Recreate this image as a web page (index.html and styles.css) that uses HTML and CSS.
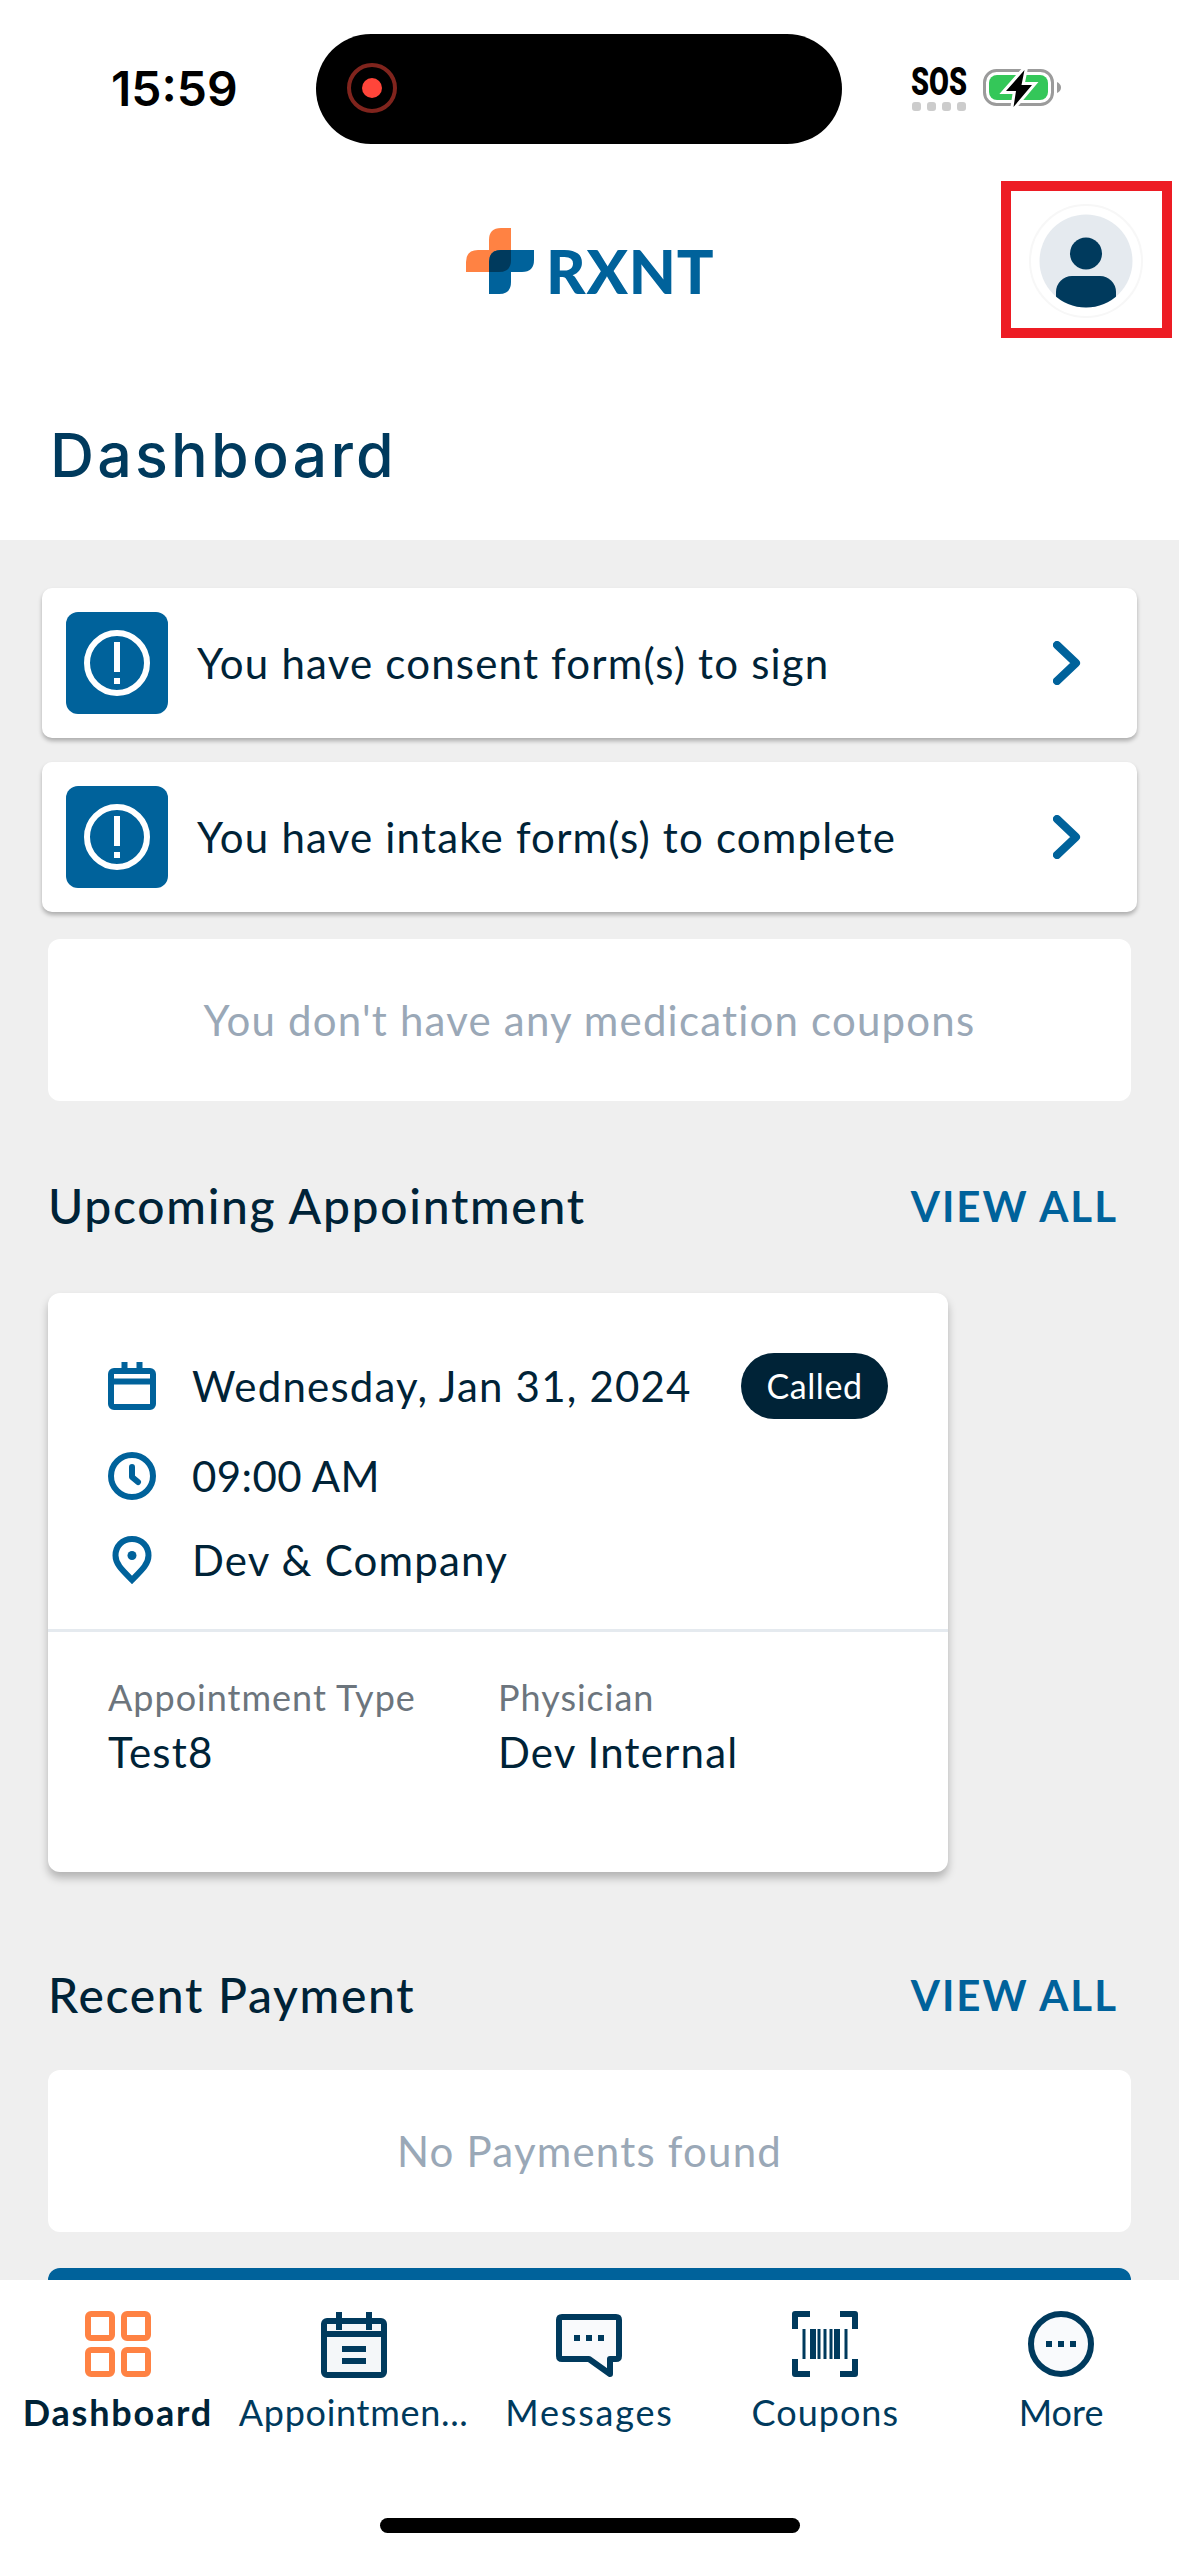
FILE: index.html
```html
<!DOCTYPE html>
<html lang="en">
<head>
    <meta charset="UTF-8">
    <meta name="viewport" content="width=device-width, initial-scale=1.0">
    <title>RXNT Dashboard</title>
    <link rel="stylesheet" href="styles.css">
</head>
<body>
    <!-- Phone status bar -->
    <div class="status-bar">
        <span class="time">15:59</span>
        <div class="island">
            <div class="record"><div class="record-dot"></div></div>
        </div>
        <div class="signal">
            <span class="sos">SOS</span>
            <div class="signal-dots"><i></i><i></i><i></i><i></i></div>
        </div>
        <svg class="battery" width="80" height="40" viewBox="0 0 80 40">
            <rect x="1.5" y="2.5" width="68" height="34" rx="12" fill="none" stroke="#9b9b9b" stroke-width="3"/>
            <rect x="6" y="7" width="59" height="25" rx="8" fill="#34c759"/>
            <path d="M74 14q4 2 4 5.500t-4 5.500z" fill="#9b9b9b"/>
            <path d="M41.500 2L23 23H33L30.500 39L49 17H38.500z" fill="#000" stroke="#fff" stroke-width="6" paint-order="stroke"/>
        </svg>
    </div>

    <!-- Header -->
    <header class="header">
        <div class="logo">
            <svg width="68" height="66" viewBox="0 0 68 66">
                <path d="M45 0H35Q23 0 23 12V22H12Q0 22 0 34V44H33Q45 44 45 32z" fill="#ff8243"/>
                <path d="M23 66V34Q23 22 35 22H68V32Q68 44 56 44H45V54Q45 66 33 66z" fill="#00629b"/>
                <path d="M23 44V34Q23 22 35 22H45V32Q45 44 33 44z" fill="#003a5d"/>
            </svg>
            <span class="logo-text">RXNT</span>
        </div>
        <div class="profile">
            <svg width="116" height="116" viewBox="0 0 116 116">
                <clipPath id="face"><circle cx="58" cy="58" r="46.500"/></clipPath>
                <circle cx="58" cy="58" r="56" fill="#fff" stroke="#f7f7f7" stroke-width="2"/>
                <circle cx="58" cy="58" r="46.500" fill="#e5eaef"/>
                <circle cx="58" cy="50.500" r="16" fill="#003a5d"/>
                <rect x="28" y="73" width="60" height="50" rx="16" fill="#003a5d" clip-path="url(#face)"/>
            </svg>
        </div>
    </header>
    <h1>Dashboard</h1>

    <main class="content">
        <div class="alert">
            <div class="alert-icon">
                <svg width="66" height="66" viewBox="0 0 66 66">
                    <circle cx="33" cy="33" r="30" fill="none" stroke="#fff" stroke-width="6"/>
                    <path d="M30 12h6v30h-6zM30 48h6v6h-6z" fill="#fff"/>
                </svg>
            </div>
            <span class="alert-text">You have consent form(s) to sign</span>
            <svg class="chevron" width="28" height="44" viewBox="0 0 28 44">
                <path d="M4 4L23 22L4 40" fill="none" stroke="#00629b" stroke-width="8" stroke-linecap="round" stroke-linejoin="round"/>
            </svg>
        </div>
        <div class="alert">
            <div class="alert-icon">
                <svg width="66" height="66" viewBox="0 0 66 66">
                    <circle cx="33" cy="33" r="30" fill="none" stroke="#fff" stroke-width="6"/>
                    <path d="M30 12h6v30h-6zM30 48h6v6h-6z" fill="#fff"/>
                </svg>
            </div>
            <span class="alert-text">You have intake form(s) to complete</span>
            <svg class="chevron" width="28" height="44" viewBox="0 0 28 44">
                <path d="M4 4L23 22L4 40" fill="none" stroke="#00629b" stroke-width="8" stroke-linecap="round" stroke-linejoin="round"/>
            </svg>
        </div>
        <div class="empty coupons">You don't have any medication coupons</div>

        <!-- Upcoming appointment -->
        <div class="section-head upcoming">
            <h2>Upcoming Appointment</h2>
            <a class="view-all">VIEW ALL</a>
        </div>
        <div class="appointment">
            <div class="details">
                <div class="row">
                    <svg width="48" height="48" viewBox="0 0 48 48" fill="none" stroke="#00629b" stroke-width="6">
                        <rect x="3" y="9" width="42" height="36" rx="3"/>
                        <path d="M3 19.500H45M16.500 0V9M31.500 0V9"/>
                    </svg>
                    <span>Wednesday, Jan 31, 2024</span>
                    <span class="badge">Called</span>
                </div>
                <div class="row row-time">
                    <svg width="48" height="48" viewBox="0 0 48 48" fill="none" stroke="#00629b" stroke-width="6">
                        <circle cx="24" cy="24" r="21"/>
                        <path d="M24 15V25L30 30" stroke-linecap="round" stroke-linejoin="round"/>
                    </svg>
                    <span class="hour">09:00 AM</span>
                </div>
                <div class="row">
                    <svg width="48" height="48" viewBox="0 0 48 48">
                        <path d="M24 3C14 3 7.500 10.500 7.500 19.500C7.500 28 14 34 24 44C34 34 40.500 28 40.500 19.500C40.500 10.500 34 3 24 3z" fill="none" stroke="#00629b" stroke-width="6"/>
                        <circle cx="24" cy="19.500" r="4.500" fill="#00629b"/>
                    </svg>
                    <span>Dev &amp; Company</span>
                </div>
            </div>
            <div class="meta">
                <div class="meta-item">
                    <span class="meta-label">Appointment Type</span>
                    <span class="meta-value">Test8</span>
                </div>
                <div class="meta-item">
                    <span class="meta-label">Physician</span>
                    <span class="meta-value">Dev Internal</span>
                </div>
            </div>
        </div>

        <!-- Recent payment -->
        <div class="section-head recent">
            <h2>Recent Payment</h2>
            <a class="view-all">VIEW ALL</a>
        </div>
        <div class="empty">No Payments found</div>
        <div class="pay-button"></div>
    </main>

    <!-- Bottom navigation -->
    <nav class="tabs">
        <div class="tab active">
            <svg width="72" height="72" viewBox="0 0 72 72" fill="none" stroke="#ff8243" stroke-width="6">
                <rect x="6" y="6" width="24" height="24" rx="3"/>
                <rect x="42" y="6" width="24" height="24" rx="3"/>
                <rect x="6" y="42" width="24" height="24" rx="3"/>
                <rect x="42" y="42" width="24" height="24" rx="3"/>
            </svg>
            <span>Dashboard</span>
        </div>
        <div class="tab tab-appointments">
            <svg width="72" height="72" viewBox="0 0 72 72" fill="none" stroke="#003a5d" stroke-width="6">
                <rect x="6" y="13" width="60" height="54" rx="3" fill="#f4f7f9"/>
                <path d="M6 26H66M21 4V22M51 4V22M24 41H48M24 53H48"/>
            </svg>
            <span>Appointmen...</span>
        </div>
        <div class="tab tab-messages">
            <svg width="72" height="72" viewBox="0 0 72 72" fill="none" stroke="#003a5d" stroke-width="6">
                <path d="M9 9H63Q66 9 66 12V48Q66 51 63 51H57V66L36 51H9Q6 51 6 48V12Q6 9 9 9z" stroke-linejoin="round" fill="#f9fafc"/>
                <path d="M21 30H27M33 30H39M45 30H51"/>
            </svg>
            <span>Messages</span>
        </div>
        <div class="tab">
            <svg width="72" height="72" viewBox="0 0 72 72" fill="none" stroke="#003a5d" stroke-width="6">
                <path d="M6 21V6H21M51 6H66V21M66 51V66H51M21 66H6V51" stroke-linejoin="round"/>
                <path d="M15 21V51M30 21V51M36 21V51M42 21V51M57 21V51" stroke-width="3"/>
                <path d="M24 21V51M48 21V51"/>
            </svg>
            <span>Coupons</span>
        </div>
        <div class="tab tab-more">
            <svg width="72" height="72" viewBox="0 0 72 72" fill="none" stroke="#003a5d" stroke-width="6">
                <circle cx="36" cy="36" r="30" fill="#f9fafc"/>
                <path d="M21 36H27M33 36H39M45 36H51"/>
            </svg>
            <span>More</span>
        </div>
    </nav>
    <div class="home-area"><div class="home-indicator"></div></div>
</body>
</html>
```
FILE: styles.css
```css
/* Global Styles */
* {
    box-sizing: border-box;
}

body {
    margin: 0;
    width: 1179px;
    height: 2556px;
    overflow: hidden;
    background-color: #fff;
    color: #002337;
    font-family: Lato, sans-serif;
    font-size: 42px;
    letter-spacing: 1.2px;
    white-space: nowrap;
    display: flex;
    flex-direction: column;
}

h1, h2 {
    margin: 0;
}

svg {
    display: block;
    flex: none;
}

/* Status Bar */
.status-bar {
    height: 181px;
    padding: 34px 0 0 111px;
    display: flex;
    align-items: flex-start;
    color: #000;
    letter-spacing: 0;
}

.time {
    width: 205px;
    font-family: Inter, sans-serif;
    font-size: 48px;
    font-weight: 600;
    line-height: 110px;
}

.island {
    width: 526px;
    height: 110px;
    border-radius: 55px;
    background-color: #000;
    padding: 29px 31px;
}

.record {
    width: 50px;
    height: 50px;
    border: 4px solid #80241d;
    border-radius: 50%;
    display: flex;
    align-items: center;
    justify-content: center;
}

.record-dot {
    width: 20px;
    height: 20px;
    border-radius: 50%;
    background-color: #ff453a;
}

.signal {
    width: 58px;
    margin: 30px 0 0 69px;
}

.sos {
    display: block;
    font-family: Roboto, sans-serif;
    font-size: 39px;
    font-weight: 900;
    line-height: 36px;
    transform: scaleX(0.74);
    transform-origin: left;
}

.signal-dots {
    display: flex;
    gap: 6px;
    padding: 2px 0 0 1px;
}

.signal-dots i {
    width: 9px;
    height: 9px;
    border-radius: 3px;
    background-color: #ccc;
}

.battery {
    margin: 34px 0 0 14px;
}

/* Header */
.header {
    height: 157px;
    padding-left: 466px;
    padding-right: 7px;
    display: flex;
    justify-content: space-between;
}

.logo {
    margin-top: 47px;
    display: flex;
}

.logo-text {
    margin: 21px 0 0 12px;
    color: #00629b;
    font-size: 61px;
    font-weight: 900;
    letter-spacing: 0.8px;
    line-height: 44px;
}

.profile {
    width: 171px;
    height: 157px;
    border: 10px solid #ed1c24;
    padding: 12px 0 0 17px;
}

h1 {
    height: 202px;
    padding: 74px 0 0 50px;
    color: #003a5d;
    font-family: Inter, sans-serif;
    font-size: 61px;
    font-weight: 500;
    letter-spacing: 3.2px;
    line-height: 86px;
}

/* Content */
.content {
    height: 1740px;
    padding: 48px 48px 0;
    background-color: #efefef;
    overflow: hidden;
}

.alert {
    height: 150px;
    margin: 0 -6px 24px;
    padding: 0 56px 0 24px;
    display: flex;
    align-items: center;
    background-color: #fff;
    border-radius: 10px;
    box-shadow: 0 3px 4px rgba(0, 0, 0, 0.28);
}

.alert-icon {
    width: 102px;
    height: 102px;
    border-radius: 12px;
    background-color: #00629b;
    display: flex;
    align-items: center;
    justify-content: center;
}

.alert-text {
    margin-left: 29px;
}

.chevron {
    margin-left: auto;
}

.empty {
    height: 162px;
    border-radius: 12px;
    background-color: #fff;
    color: #9aa8b7;
    display: flex;
    align-items: center;
    justify-content: center;
}

.coupons {
    margin-top: 27px;
}

.section-head {
    display: flex;
    justify-content: space-between;
    align-items: center;
    padding-right: 13px;
    line-height: 60px;
}

.upcoming {
    margin: 75px 0 57px;
}

.recent {
    margin: 93px 0 45px;
}

h2 {
    font-size: 48px;
    font-weight: 500;
    letter-spacing: 1.7px;
}

.view-all {
    color: #00629b;
    font-size: 42px;
    font-weight: 700;
    letter-spacing: 2px;
}

/* Appointment Card */
.appointment {
    width: 900px;
    height: 579px;
    border-radius: 12px;
    background-color: #fff;
    box-shadow: 0 6px 8px rgba(0, 0, 0, 0.25);
}

.details {
    height: 339px;
    padding: 60px 60px 0;
    border-bottom: 3px solid #e5eaef;
}

.row {
    height: 66px;
    display: flex;
    align-items: center;
}

.row svg {
    margin-right: 36px;
}

.row-time {
    margin: 24px 0 18px;
}

.hour {
    letter-spacing: 0.4px;
}

.badge {
    width: 147px;
    height: 66px;
    margin-left: auto;
    border-radius: 33px;
    background-color: #002337;
    color: #fff;
    font-size: 34px;
    letter-spacing: 0.6px;
    line-height: 66px;
    text-align: center;
}

.meta {
    display: flex;
    padding: 39px 0 0 60px;
}

.meta-item {
    width: 390px;
    display: flex;
    flex-direction: column;
}

.meta-label {
    color: #6c757d;
    font-size: 36px;
    letter-spacing: 1px;
    line-height: 52px;
}

.meta-value {
    line-height: 58px;
}

.pay-button {
    height: 150px;
    margin-top: 36px;
    border-radius: 12px;
    background-color: #00629b;
}

/* Bottom Navigation */
.tabs {
    height: 200px;
    padding-top: 28px;
    display: flex;
    color: #003a5d;
    font-size: 36px;
    letter-spacing: 1px;
}

.tab {
    width: 236px;
    display: flex;
    flex-direction: column;
    align-items: center;
}

.tab span {
    margin-top: 7px;
    line-height: 50px;
}

.tab-appointments {
    letter-spacing: 0.7px;
}

.tab-messages {
    letter-spacing: 1.8px;
}

.tab-more {
    letter-spacing: 0;
}

.active {
    color: #002337;
    font-weight: 700;
    letter-spacing: 1.8px;
}

.home-area {
    padding-top: 38px;
}

.home-indicator {
    width: 420px;
    height: 15px;
    margin: 0 auto;
    border-radius: 8px;
    background-color: #000;
}
```
